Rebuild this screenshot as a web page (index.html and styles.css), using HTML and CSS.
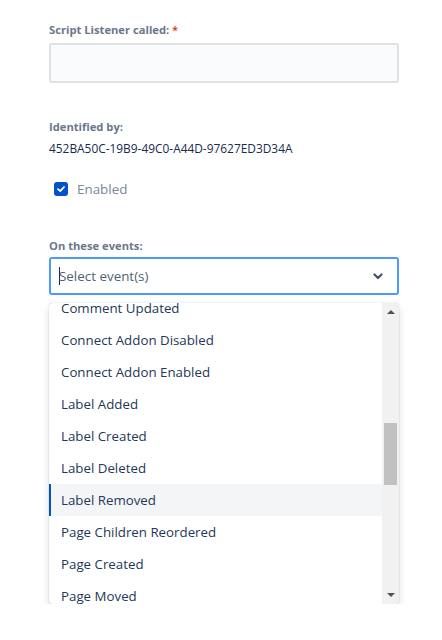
FILE: index.html
```html
<!DOCTYPE html>
<html>
<head>
<meta charset="utf-8">
<link rel="stylesheet" href="styles.css">
</head>
<body>
<div class="form">
  <div class="field">
    <label class="label">Script Listener called: <span class="req">*</span></label>
    <div class="textbox"></div>
  </div>
  <div class="ident">
    <div class="label">Identified by:</div>
    <div class="uuid">452BA50C-19B9-49C0-A44D-97627ED3D34A</div>
  </div>
  <div class="check-row">
    <span class="checkbox">
      <svg width="10" height="10" viewBox="0 0 10 10"><path d="M2 5.2 L4.2 7.2 L8 3" fill="none" stroke="#fff" stroke-width="1.8" stroke-linecap="round" stroke-linejoin="round"/></svg>
    </span>
    <span class="check-label">Enabled</span>
  </div>
  <div class="events">
    <div class="label">On these events:</div>
    <div class="select">
      <span class="caret"></span>
      <span class="placeholder">Select event(s)</span>
      <svg class="chevron" width="10" height="7" viewBox="0 0 10 7"><path d="M1.5 1.5 L5 5 L8.5 1.5" fill="none" stroke="#42526e" stroke-width="2.2" stroke-linecap="round" stroke-linejoin="round"/></svg>
    </div>
    <div class="menu">
      <div class="list">
        <div class="items">
          <div class="item">Comment Updated</div>
          <div class="item">Connect Addon Disabled</div>
          <div class="item">Connect Addon Enabled</div>
          <div class="item">Label Added</div>
          <div class="item">Label Created</div>
          <div class="item">Label Deleted</div>
          <div class="item active">Label Removed</div>
          <div class="item">Page Children Reordered</div>
          <div class="item">Page Created</div>
          <div class="item">Page Moved</div>
        </div>
      </div>
      <div class="scrollbar">
        <span class="arrow up"></span>
        <div class="track"><div class="thumb"></div></div>
        <span class="arrow down"></span>
      </div>
    </div>
  </div>
</div>
</body>
</html>
```
FILE: styles.css
```css
html, body {
  margin: 0;
  padding: 0;
  background: #ffffff;
}
body {
  font-family: "Open Sans", "Noto Sans", sans-serif;
  color: #172b4d;
}
.form {
  width: 350px;
  padding: 22px 0 0 49px;
}
.label {
  display: block;
  font-size: 11.2px;
  font-weight: 700;
  color: #6b778c;
  line-height: 16px;
}
.req {
  color: #de350b;
  font-weight: 600;
}
.textbox {
  margin-top: 5px;
  height: 36px;
  border: 2px solid #dfe1e6;
  border-radius: 3px;
  background: #fafbfc;
}
.ident {
  margin-top: 36px;
}
.uuid {
  margin-top: 5px;
  font-size: 11.9px;
  line-height: 16px;
  color: #172b4d;
}
.check-row {
  display: flex;
  align-items: center;
  margin-top: 25px;
  padding-left: 5px;
  height: 16px;
}
.checkbox {
  width: 14px;
  height: 14px;
  border-radius: 3px;
  background: #0052cc;
  display: flex;
  align-items: center;
  justify-content: center;
}
.check-label {
  margin-left: 9px;
  font-size: 13.4px;
  color: #7a869a;
  line-height: 16px;
}
.events {
  margin-top: 41px;
}
.select {
  margin-top: 3px;
  height: 34px;
  border: 2px solid #4c9aff;
  border-radius: 3px;
  background: #fff;
  display: flex;
  align-items: center;
  padding: 0 14px 0 8px;
}
.caret {
  width: 1px;
  height: 18px;
  background: #172b4d;
}
.placeholder {
  flex: 1;
  font-size: 13.4px;
  color: #505f79;
  margin-left: -1px;
}
.chevron {
  display: block;
}
.menu {
  margin-top: 8px;
  height: 301px;
  border-radius: 4px;
  background: #fff;
  box-shadow: 0 4px 8px -2px rgba(9, 30, 66, 0.25), 0 0 1px rgba(9, 30, 66, 0.4);
  display: flex;
  overflow: hidden;
}
.list {
  flex: 1;
  overflow: hidden;
}
.items {
  margin-top: -11px;
}
.item {
  height: 32px;
  line-height: 32px;
  padding-left: 10px;
  font-size: 13.3px;
  color: #253858;
  border-left: 2px solid transparent;
}
.item.active {
  background: #f4f5f7;
  border-left-color: #0052cc;
}
.scrollbar {
  width: 17px;
  background: #f1f1f1;
  display: flex;
  flex-direction: column;
  align-items: center;
}
.arrow {
  width: 0;
  height: 0;
  border-left: 4px solid transparent;
  border-right: 4px solid transparent;
}
.arrow.up {
  margin: 7px 0 6px;
  border-bottom: 4px solid #505050;
}
.arrow.down {
  margin: 6px 0 7px;
  border-top: 4px solid #505050;
}
.track {
  flex: 1;
  width: 100%;
  display: flex;
  flex-direction: column;
}
.thumb {
  margin: 103px 2px 0;
  height: 62px;
  background: #c1c1c1;
}
```
